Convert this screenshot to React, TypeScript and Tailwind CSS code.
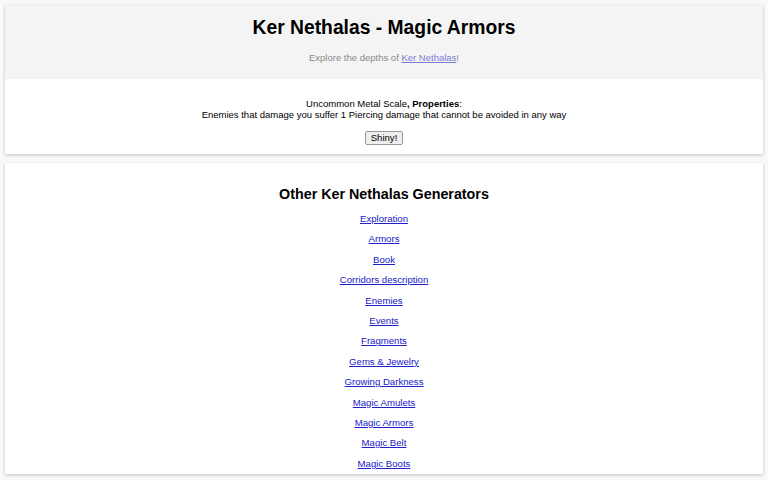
import React from "react";

const generators = [
  "Exploration",
  "Armors",
  "Book",
  "Corridors description",
  "Enemies",
  "Events",
  "Fragments",
  "Gems & Jewelry",
  "Growing Darkness",
  "Magic Amulets",
  "Magic Armors",
  "Magic Belt",
  "Magic Boots",
];

export default function App() {
  return (
    <div
      className="h-[480px] overflow-hidden bg-[#f9f9f9] px-[5px] pt-[5px] text-black"
      style={{ fontFamily: '"Liberation Sans", Arial, sans-serif' }}
    >
      <div className="bg-white shadow-[0_1px_3px_rgba(0,0,0,0.25)]">
        <header className="flex h-[74px] flex-col items-center bg-[#f4f4f4] pt-[12px]">
          <h1 className="text-[19.3px] font-bold leading-[22px]">Ker Nethalas - Magic Armors</h1>
          <p className="mt-[13px] text-[9.5px] leading-[12px] text-[#8a8a8a]">
            Explore the depths of{" "}
            <a href="#" className="text-[#7b7bd6] underline">
              Ker Nethalas
            </a>
            !
          </p>
        </header>
        <div className="flex h-[75px] flex-col items-center pt-[19px] text-[9.5px] leading-[11px]">
          <p>
            Uncommon Metal Scale<b>, Properties</b>:
          </p>
          <p>Enemies that damage you suffer 1 Piercing damage that cannot be avoided in any way</p>
          <button className="mt-[11px] rounded-[2px] border border-[#9a9a9a] bg-[#efefef] px-[5px] text-[9.6px] leading-[12px]">
            Shiny!
          </button>
        </div>
      </div>

      <div className="mt-[9px] h-[311px] overflow-hidden bg-white pt-[22px] shadow-[0_1px_3px_rgba(0,0,0,0.25)]">
        <h2 className="text-center text-[14.3px] font-bold leading-[18px]">Other Ker Nethalas Generators</h2>
        <ul className="mt-[10px] flex flex-col items-center gap-[8.4px]">
          {generators.map((g) => (
            <li key={g} className="text-[9.6px] leading-[12px]">
              <a href="#" className="text-[#2020c8] underline">
                {g}
              </a>
            </li>
          ))}
        </ul>
      </div>
    </div>
  );
}
